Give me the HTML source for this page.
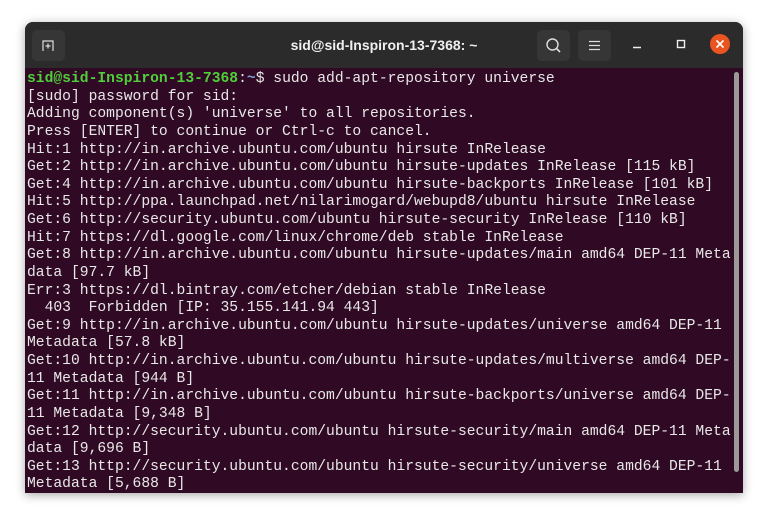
<!DOCTYPE html>
<html><head><style>
body{margin:0;width:768px;height:521px;background:#fff;position:relative;overflow:hidden;font-family:"Liberation Sans",sans-serif}
.win{position:absolute;left:25px;top:22px;width:718px;height:471px;border-radius:8px 8px 0 0;overflow:hidden;box-shadow:0 2px 10px rgba(0,0,0,.35);background:#300a24}
.hdr{position:absolute;left:0;top:0;width:718px;height:46px;background:#2b2b2b}
.btn{position:absolute;top:8px;width:33px;height:31px;background:#363636;border-radius:5px}
.title{position:absolute;left:0;width:718px;top:15px;text-align:center;color:#f0f0f0;font-weight:bold;font-size:14px}
pre{position:absolute;left:2px;top:49px;margin:0;font-family:"Liberation Mono",monospace;font-size:14.66px;line-height:17.62px;color:#e8e8e8}
.g{color:#4fcf3a;font-weight:bold}.b{color:#7d9fd3;font-weight:bold}
.sb{position:absolute;left:709px;top:50px;width:5px;height:400px;background:#9a9a9a;border-radius:3px}
</style></head><body>
<div class="win">
<div class="hdr">
<div class="btn" style="left:7px"><svg width="33" height="31"><path d="M11 21V11h10v10" stroke="#ddd" fill="none" stroke-width="1.2"/><path d="M13.5 16h5M16 13.5v5" stroke="#ddd" stroke-width="1.2"/></svg></div>
<div class="title">sid@sid-Inspiron-13-7368: ~</div>
<div class="btn" style="left:512px"><svg width="33" height="31"><circle cx="15.5" cy="14.5" r="5.5" stroke="#ddd" fill="none" stroke-width="1.4"/><path d="M19.5 18.5l3.5 3.5" stroke="#ddd" stroke-width="1.6"/></svg></div>
<div class="btn" style="left:553px"><svg width="33" height="31"><path d="M11 11.5h11M11 15.5h11M11 19.5h11" stroke="#ddd" stroke-width="1.2"/></svg></div>
<svg style="position:absolute;left:600px;top:13px" width="70" height="24"><path d="M8 12.5h8" stroke="#eee" stroke-width="1.5"/><rect x="52.5" y="5.5" width="7" height="7" stroke="#eee" fill="none" stroke-width="1.4"/></svg>
<div style="position:absolute;left:685px;top:12px;width:20px;height:20px;border-radius:50%;background:#e95420"><svg width="20" height="20"><path d="M6.5 6.5l7 7M13.5 6.5l-7 7" stroke="#fff" stroke-width="1.6"/></svg></div>
</div>
<pre><span class="g">sid@sid-Inspiron-13-7368</span>:<span class="b">~</span>$ sudo add-apt-repository universe
[sudo] password for sid:
Adding component(s) 'universe' to all repositories.
Press [ENTER] to continue or Ctrl-c to cancel.
Hit:1 http://in.archive.ubuntu.com/ubuntu hirsute InRelease
Get:2 http://in.archive.ubuntu.com/ubuntu hirsute-updates InRelease [115 kB]
Get:4 http://in.archive.ubuntu.com/ubuntu hirsute-backports InRelease [101 kB]
Hit:5 http://ppa.launchpad.net/nilarimogard/webupd8/ubuntu hirsute InRelease
Get:6 http://security.ubuntu.com/ubuntu hirsute-security InRelease [110 kB]
Hit:7 https://dl.google.com/linux/chrome/deb stable InRelease
Get:8 http://in.archive.ubuntu.com/ubuntu hirsute-updates/main amd64 DEP-11 Meta
data [97.7 kB]
Err:3 https://dl.bintray.com/etcher/debian stable InRelease
  403  Forbidden [IP: 35.155.141.94 443]
Get:9 http://in.archive.ubuntu.com/ubuntu hirsute-updates/universe amd64 DEP-11
Metadata [57.8 kB]
Get:10 http://in.archive.ubuntu.com/ubuntu hirsute-updates/multiverse amd64 DEP-
11 Metadata [944 B]
Get:11 http://in.archive.ubuntu.com/ubuntu hirsute-backports/universe amd64 DEP-
11 Metadata [9,348 B]
Get:12 http://security.ubuntu.com/ubuntu hirsute-security/main amd64 DEP-11 Meta
data [9,696 B]
Get:13 http://security.ubuntu.com/ubuntu hirsute-security/universe amd64 DEP-11
Metadata [5,688 B]</pre>
<div class="sb"></div>
</div>
</body></html>
